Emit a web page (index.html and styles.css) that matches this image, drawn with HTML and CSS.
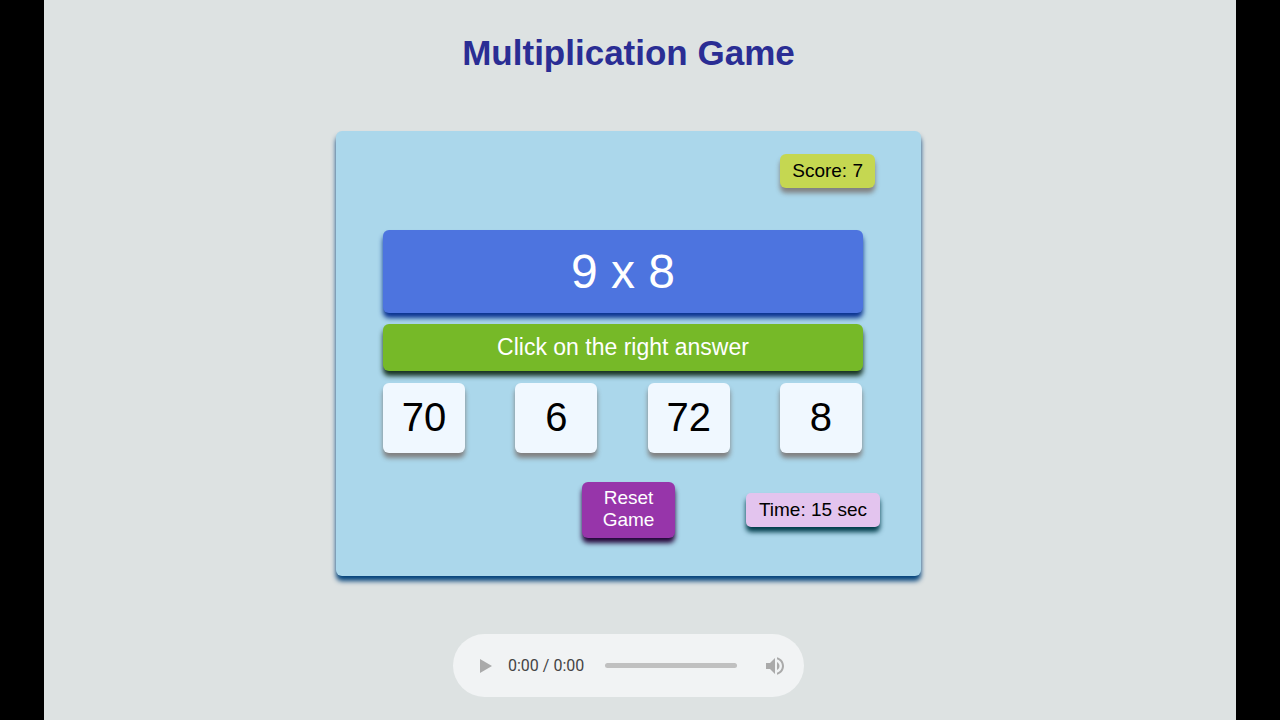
FILE: index.html
```html
<!DOCTYPE html>
<html lang="en">
<head>
  <meta charset="UTF-8">
  <meta name="viewport" content="width=device-width, initial-scale=1.0">
  <title>Multiplication Game</title>
  <link rel="stylesheet" href="styles.css">
</head>
<body>

  <div id="page">
    <h1>Multiplication Game</h1>

    <main id="container">
      <div class="score-row">
        <div id="score">Score: <span id="scoreValue">7</span></div>
      </div>

      <div class="board">
        <div id="question">9 x 8</div>
        <div id="instruction">Click on the right answer</div>
        <div id="choices">
          <button class="box">70</button>
          <button class="box">6</button>
          <button class="box">72</button>
          <button class="box">8</button>
        </div>
      </div>

      <div class="controls">
        <button id="reset">Reset<br>Game</button>
        <div id="time">Time: <span id="timeValue">15</span> sec</div>
      </div>
    </main>

    <!-- music player -->
    <div class="player">
      <button class="play" aria-label="Play">
        <svg width="12" height="14" viewBox="0 0 12 14"><path d="M0 0v14l12-7z"/></svg>
      </button>
      <span class="clock">0:00 / 0:00</span>
      <input class="seek" type="range" min="0" max="100" value="0" aria-label="Seek">
      <button class="mute" aria-label="Mute">
        <svg width="18" height="18" viewBox="3 3 18 18"><path d="M3 9v6h4l5 5V4L7 9H3zm13.5 3c0-1.77-1.02-3.29-2.5-4.03v8.05c1.48-.73 2.5-2.25 2.5-4.02zM14 3.23v2.06c2.89.86 5 3.54 5 6.71s-2.11 5.85-5 6.71v2.06c4.01-.91 7-4.49 7-8.77s-2.99-7.86-7-8.77z"/></svg>
      </button>
    </div>
  </div>

  <script>
    const answer = 72;
    let score = 7;

    document.querySelectorAll(".box").forEach(box => {
      box.onclick = () => {
        if (Number(box.textContent) === answer) {
          score++;
          document.getElementById("scoreValue").textContent = score;
        }
      };
    });

    document.getElementById("reset").onclick = () => {
      score = 0;
      document.getElementById("scoreValue").textContent = score;
    };
  </script>

</body>
</html>
```
FILE: styles.css
```css
* { box-sizing: border-box; }
body {
  margin: 0;
  padding: 0 44px;
  background: #000;
  font-family: "Liberation Sans", Arial, sans-serif;
}
#page {
  display: flex;
  flex-direction: column;
  align-items: center;
  min-height: 100vh;
  padding: 33px 23px 23px 0;
  background: #dde2e2;
}
h1 {
  margin: 0 0 58px;
  font-size: 35px;
  line-height: 40px;
  color: #2a2d94;
}
button {
  border: none;
  font-family: inherit;
  cursor: pointer;
}

#container {
  width: 100%;
  max-width: 585px;
  padding: 23px 41px 38px;
  border-radius: 6px;
  background: #abd7eb;
  box-shadow: 0 5px 5px #04437b;
}
.score-row {
  display: flex;
  justify-content: flex-end;
  padding-right: 5px;
  margin-bottom: 42px;
}
#score {
  padding: 6px 12px;
  border-radius: 6px;
  font-size: 19px;
  line-height: 22px;
  background: #c5d751;
  box-shadow: 0 5px 5px #808080;
}

.board {
  display: flex;
  flex-direction: column;
  padding: 0 17px 0 6px;
  text-align: center;
  color: #fff;
}
#question {
  margin-bottom: 11px;
  padding: 14px;
  border-radius: 6px;
  font-size: 48px;
  line-height: 55px;
  background: #4d74df;
  box-shadow: 0 5px 5px #093290;
}
#instruction {
  margin-bottom: 12px;
  padding: 10px;
  border-radius: 6px;
  font-size: 23px;
  line-height: 27px;
  background: #76b928;
  box-shadow: 0 5px 5px #173322;
}
#choices {
  display: flex;
  justify-content: space-between;
  padding-right: 1px;
}
.box {
  width: 82px;
  padding: 11px 0 13px;
  border-radius: 6px;
  font-size: 40px;
  line-height: 46px;
  color: #000;
  background: #f0f8ff;
  box-shadow: 0 5px 5px #808080;
}

.controls {
  display: grid;
  grid-template-columns: 1fr auto 1fr;
  align-items: center;
  margin-top: 29px;
}
#reset {
  grid-column: 2;
  padding: 5px 21px 7px;
  border-radius: 6px;
  font-size: 19px;
  line-height: 22px;
  color: #fff;
  background: #9735aa;
  box-shadow: 0 5px 5px #25063a;
}
#time {
  justify-self: end;
  padding: 6px 13px;
  border-radius: 5px;
  font-size: 19px;
  line-height: 22px;
  background: #e3c4ee;
  box-shadow: 0 5px 5px #003c4a;
}

.player {
  display: flex;
  align-items: center;
  width: 351px;
  max-width: 100%;
  height: 63px;
  margin-top: 58px;
  padding: 0 20px 0 27px;
  border-radius: 32px;
  background: #f1f3f4;
}
.player button {
  display: flex;
  padding: 0;
  background: none;
}
.player svg { fill: #aaa; }
.clock {
  margin: 0 21px 0 16px;
  font-family: Roboto, sans-serif;
  font-size: 16px;
  color: #444;
}
.seek {
  appearance: none;
  flex: 1;
  min-width: 0;
  height: 5px;
  margin: 0 29px 0 0;
  border-radius: 3px;
  background: #c0c0c0;
}
.seek::-webkit-slider-thumb {
  appearance: none;
  width: 0;
  height: 0;
}
```
